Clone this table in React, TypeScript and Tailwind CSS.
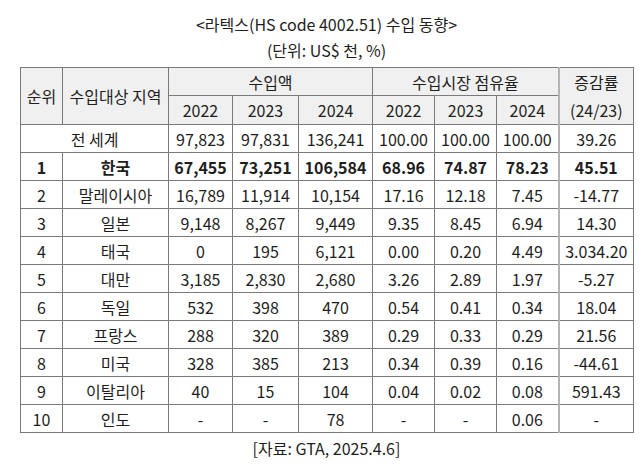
import React from 'react';

type Row = {
  rank: string;
  name: string;
  amt: [string, string, string];
  share: [string, string, string];
  rate: string;
  bold?: boolean;
};

const rows: Row[] = [
  { rank: '1', name: '한국', amt: ['67,455', '73,251', '106,584'], share: ['68.96', '74.87', '78.23'], rate: '45.51', bold: true },
  { rank: '2', name: '말레이시아', amt: ['16,789', '11,914', '10,154'], share: ['17.16', '12.18', '7.45'], rate: '-14.77' },
  { rank: '3', name: '일본', amt: ['9,148', '8,267', '9,449'], share: ['9.35', '8.45', '6.94'], rate: '14.30' },
  { rank: '4', name: '태국', amt: ['0', '195', '6,121'], share: ['0.00', '0.20', '4.49'], rate: '3.034.20' },
  { rank: '5', name: '대만', amt: ['3,185', '2,830', '2,680'], share: ['3.26', '2.89', '1.97'], rate: '-5.27' },
  { rank: '6', name: '독일', amt: ['532', '398', '470'], share: ['0.54', '0.41', '0.34'], rate: '18.04' },
  { rank: '7', name: '프랑스', amt: ['288', '320', '389'], share: ['0.29', '0.33', '0.29'], rate: '21.56' },
  { rank: '8', name: '미국', amt: ['328', '385', '213'], share: ['0.34', '0.39', '0.16'], rate: '-44.61' },
  { rank: '9', name: '이탈리아', amt: ['40', '15', '104'], share: ['0.04', '0.02', '0.08'], rate: '591.43' },
  { rank: '10', name: '인도', amt: ['-', '-', '78'], share: ['-', '-', '0.06'], rate: '-' },
];

const cell = 'border border-[#7a7a7a] h-[28px] p-0 text-center align-middle';
const head = cell + ' bg-[#f0f0f0] font-normal';
const rateCell = 'border-l-2 border-l-[#b4b4b4]';

const App: React.FC = () => {
  return (
    <div
      className="w-[639px] h-[466px] bg-white text-[#1e1e1e] text-[16px] leading-[26px]"
      style={{ fontFamily: '"Noto Sans CJK KR", "Noto Sans", sans-serif' }}
    >
      <div className="ml-[20px] w-[613px] pt-[11px] flex flex-col">
        <div className="text-center">&lt;라텍스(HS code 4002.51) 수입 동향&gt;</div>
        <div className="text-center">(단위: US$ 천, %)</div>

        <table className="mt-[4px] w-[613px] table-fixed border-collapse">
          <colgroup>
            <col className="w-[42px]" />
            <col className="w-[106px]" />
            <col className="w-[64px]" />
            <col className="w-[66px]" />
            <col className="w-[74px]" />
            <col className="w-[62px]" />
            <col className="w-[62px]" />
            <col className="w-[62px]" />
            <col className="w-[75px]" />
          </colgroup>
          <thead>
            <tr>
              <th rowSpan={2} className={head}>순위</th>
              <th rowSpan={2} className={head}>수입대상 지역</th>
              <th colSpan={3} className={head}>수입액</th>
              <th colSpan={3} className={head}>수입시장 점유율</th>
              <th rowSpan={2} className={`${head} ${rateCell} leading-[28px]`}>
                증감률
                <br />
                (24/23)
              </th>
            </tr>
            <tr>
              {['2022', '2023', '2024', '2022', '2023', '2024'].map((y, i) => (
                <th key={i} className={`${head} h-[29px]`}>{y}</th>
              ))}
            </tr>
          </thead>
          <tbody>
            <tr>
              <td colSpan={2} className={cell}>전 세계</td>
              <td className={cell}>97,823</td>
              <td className={cell}>97,831</td>
              <td className={cell}>136,241</td>
              <td className={cell}>100.00</td>
              <td className={cell}>100.00</td>
              <td className={cell}>100.00</td>
              <td className={`${cell} ${rateCell}`}>39.26</td>
            </tr>
            {rows.map((r) => (
              <tr key={r.rank} className={r.bold ? 'font-bold' : ''}>
                <td className={cell}>{r.rank}</td>
                <td className={cell}>{r.name}</td>
                {r.amt.map((v, i) => (
                  <td key={'a' + i} className={cell}>{v}</td>
                ))}
                {r.share.map((v, i) => (
                  <td key={'s' + i} className={cell}>{v}</td>
                ))}
                <td className={`${cell} ${rateCell}`}>{r.rate}</td>
              </tr>
            ))}
          </tbody>
        </table>

        <div className="mt-[2px] text-center">[자료: GTA, 2025.4.6]</div>
      </div>
    </div>
  );
};

export default App;
